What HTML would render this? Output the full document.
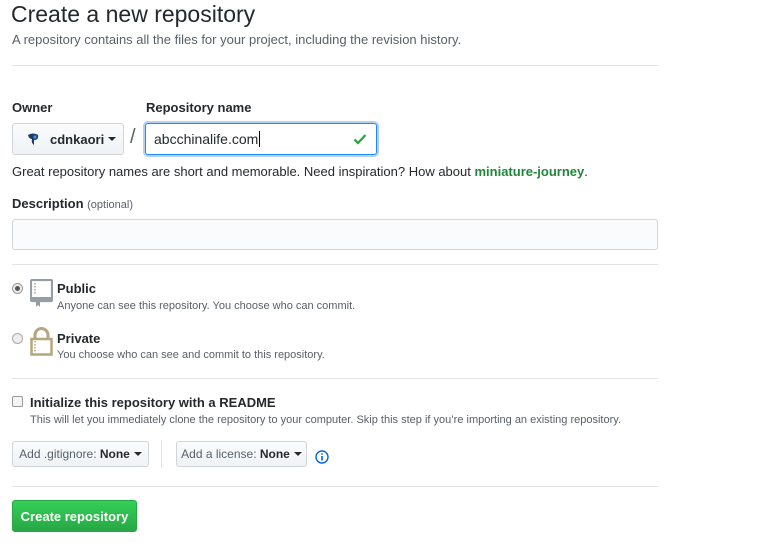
<!DOCTYPE html>
<html><head><style>
*{box-sizing:border-box}
body{margin:0;background:#fff;font-family:"Liberation Sans",sans-serif;color:#24292e;width:768px;height:552px;overflow:hidden;position:relative}
.a{position:absolute;white-space:nowrap}
.hr{position:absolute;left:12px;width:646px;height:1px;background:#e1e4e8}
.btn{position:absolute;background:linear-gradient(#fafbfc,#eff3f6);border:1px solid #d1d5da;border-radius:3px;font-size:12px;font-weight:bold;color:#24292e;display:flex;align-items:center;justify-content:center}
.caret{display:inline-block;width:0;height:0;border-left:4px solid transparent;border-right:4px solid transparent;border-top:4px solid #24292e;margin-left:4px;vertical-align:middle}
.g{color:#586069;font-weight:normal}
.sm{font-size:11px;color:#586069}
</style></head><body>
<div class="a" style="left:11px;top:1px;font-size:23px;">Create a new repository</div>
<div class="a" style="left:12px;top:32px;font-size:13px;color:#586069">A repository contains all the files for your project, including the revision history.</div>
<div class="hr" style="top:65px"></div>
<div class="a" style="left:12px;top:100px;font-size:13px;font-weight:bold">Owner</div>
<div class="a" style="left:146px;top:100px;font-size:13px;font-weight:bold">Repository name</div>
<div class="btn" style="left:12px;top:123px;width:112px;height:32px;font-size:13px;justify-content:flex-start;padding-left:12px">
<svg width="16" height="16" viewBox="0 0 16 16" style="margin-right:9px"><path d="M3 4 Q8 1 13 4 Q14 9 9 9 L9 14 Q6 12 7 8 Q4 8 3 4Z" fill="#1b3a6b"/><circle cx="10" cy="6" r="1.6" fill="#4a90d9"/></svg>cdnkaori<span class="caret"></span></div>
<div class="a" style="left:130px;top:126px;font-size:20px;color:#586069">/</div>
<div class="a" style="left:145px;top:123px;width:232px;height:32px;border:1px solid #2188ff;border-radius:3px;box-shadow:0 0 0 2px rgba(3,102,214,.3);font-size:14px;padding:7px 8px">abcchinalife.com<span style="border-left:1px solid #000;margin-left:1px"></span>
<svg width="14" height="14" viewBox="0 0 14 14" style="position:absolute;right:9px;top:8px"><path d="M1.5 7.5 L5 11 L12.5 3" stroke="#28a745" stroke-width="2.3" fill="none"/></svg></div>
<div class="a" style="left:12px;top:164px;font-size:13px">Great repository names are short and memorable. Need inspiration? How about <b style="color:#22863a">miniature-journey</b>.</div>
<div class="a" style="left:12px;top:196px;font-size:13px;font-weight:bold">Description <span style="font-size:11px;font-weight:normal;color:#586069">(optional)</span></div>
<div class="a" style="left:12px;top:219px;width:646px;height:31px;border:1px solid #d1d5da;border-radius:3px;background:#fafbfc"></div>
<div class="hr" style="top:264px"></div>
<div class="a" style="left:12px;top:283px;width:11px;height:11px;border:1px solid #999;border-radius:50%;background:#eee"><div style="width:5px;height:5px;border-radius:50%;background:#555;margin:2px"></div></div>
<svg class="a" style="left:30px;top:279px" width="23" height="28" viewBox="0 0 23 28"><rect x="1" y="1" width="21" height="21" rx="1" fill="none" stroke="#959da5" stroke-width="2.2"/><rect x="1" y="18" width="21" height="4" fill="#959da5"/><path d="M5 4v12" stroke="#959da5" stroke-width="1.5" stroke-dasharray="1.5 1.5"/><path d="M6 22v6l2-2 2 2v-6z" fill="#959da5"/></svg>
<div class="a" style="left:57px;top:281px;font-size:13px;font-weight:bold">Public</div>
<div class="a sm" style="left:57px;top:300px">Anyone can see this repository. You choose who can commit.</div>
<div class="a" style="left:12px;top:333px;width:11px;height:11px;border:1px solid #aaa;border-radius:50%;background:#eee"></div>
<svg class="a" style="left:30px;top:327px" width="23" height="29" viewBox="0 0 23 29"><path d="M5 12V8a6.5 6.5 0 0 1 13 0v4" fill="none" stroke="#b6a67d" stroke-width="3"/><rect x="1.5" y="12" width="20" height="15.5" fill="none" stroke="#b6a67d" stroke-width="2.5"/><path d="M5 14v11" stroke="#b6a67d" stroke-width="1.5" stroke-dasharray="1.5 1.5"/></svg>
<div class="a" style="left:57px;top:331px;font-size:13px;font-weight:bold">Private</div>
<div class="a sm" style="left:57px;top:349px">You choose who can see and commit to this repository.</div>
<div class="hr" style="top:378px"></div>
<div class="a" style="left:12px;top:396px;width:11px;height:11px;border:1px solid #999;border-radius:2px;background:#f4f4f4"></div>
<div class="a" style="left:30px;top:395px;font-size:13px;font-weight:bold">Initialize this repository with a README</div>
<div class="a sm" style="left:30px;top:414px">This will let you immediately clone the repository to your computer. Skip this step if you’re importing an existing repository.</div>
<div class="btn" style="left:12px;top:441px;width:137px;height:26px"><span class="g">Add .gitignore:&nbsp;</span>None<span class="caret"></span></div>
<div class="a" style="left:161px;top:440px;width:1px;height:28px;background:#e1e4e8"></div>
<div class="btn" style="left:176px;top:441px;width:131px;height:26px"><span class="g">Add a license:&nbsp;</span>None<span class="caret"></span></div>
<svg class="a" style="left:315px;top:450px" width="14" height="14" viewBox="0 0 14 14"><circle cx="7" cy="7" r="6" fill="none" stroke="#0366d6" stroke-width="1.4"/><rect x="6.2" y="6" width="1.6" height="4.5" fill="#0366d6"/><circle cx="7" cy="4" r="0.9" fill="#0366d6"/></svg>
<div class="hr" style="top:486px"></div>
<div class="a" style="left:12px;top:500px;width:125px;height:32px;border-radius:3px;background:linear-gradient(#34d058,#28a745);border:1px solid #28a745;color:#fff;font-size:13px;font-weight:bold;display:flex;align-items:center;justify-content:center">Create repository</div>
</body></html>
